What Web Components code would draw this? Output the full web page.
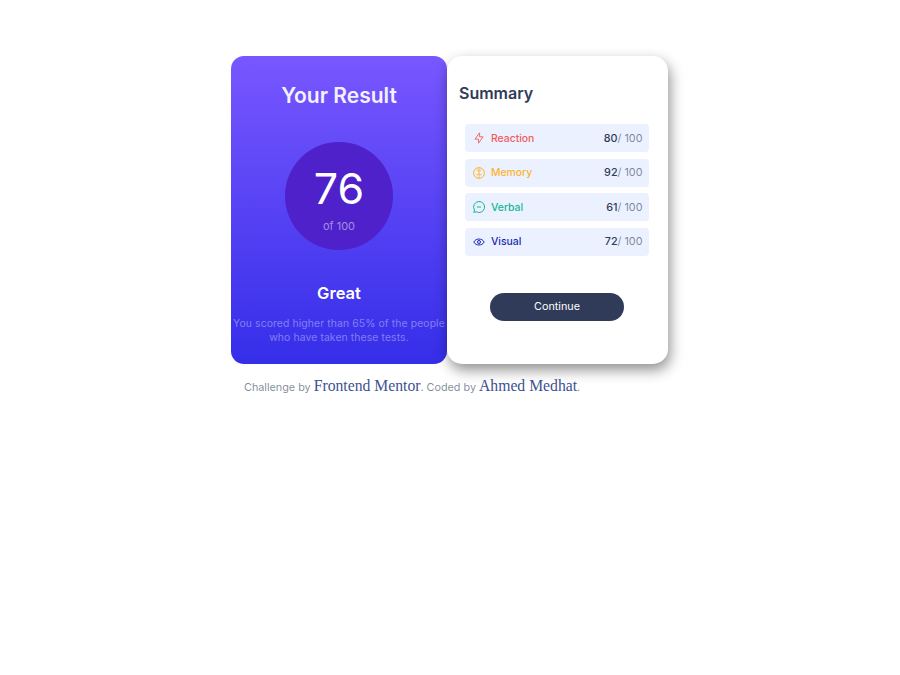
<!DOCTYPE html>
<html lang="en">
<head>
<meta charset="utf-8">
<title>Results summary</title>
<style>
html,body{margin:0;background:#fff;}
</style>
</head>
<body>
<result-page>
  <result-panel score="76"></result-panel>
  <summary-panel>
    <score-row label="Reaction" value="80" color="#f25c5c" icon="bolt"></score-row>
    <score-row label="Memory" value="92" color="#fdb52f" icon="brain"></score-row>
    <score-row label="Verbal" value="61" color="#12b893" icon="chat"></score-row>
    <score-row label="Visual" value="72" color="#1a2bb8" icon="eye"></score-row>
  </summary-panel>
  <credit-line slot="foot"></credit-line>
</result-page>
<script>
const F='"Inter","Liberation Sans",sans-serif';
function def(name,html){
  customElements.define(name,class extends HTMLElement{
    connectedCallback(){
      if(this.shadowRoot)return;
      const r=this.attachShadow({mode:'open'});
      r.innerHTML=typeof html==='function'?html(this):html;
    }
  });
}
def('result-page',`<style>
:host{display:block;width:437px;margin-left:231px;padding-top:56px}
.cards{display:flex;height:308px}
</style><div class="cards"><slot></slot></div><slot name="foot"></slot>`);
def('result-panel',h=>`<style>
:host{display:flex;flex-direction:column;align-items:center;box-sizing:border-box;width:216px;height:308px;flex:none;border-radius:13px;background:linear-gradient(#7857ff,#352ee9);color:#fff;font-family:${F};text-align:center}
h1{margin:26px 0 0;font-size:21px;line-height:27px;font-weight:600;color:#f4f1ff}
.c{margin-top:33px;width:108px;height:108px;border-radius:50%;background:#4e21ca;display:flex;flex-direction:column;align-items:center}
.n{font-size:43px;line-height:54px;margin-top:19px;font-weight:400;color:#fff}
.o{font-size:11px;line-height:14px;margin-top:4px;color:#ebf1ff88}
h2{margin:32px 0 0;font-size:16.500px;line-height:22px;font-weight:600}
p{margin:12.500px 0 0;font-size:10.400px;line-height:14.400px;color:#ebf1ff66;white-space:nowrap;letter-spacing:.1px}
</style><h1>Your Result</h1><div class="c"><div class="n">${h.getAttribute('score')}</div><div class="o">of 100</div></div><h2>Great</h2><p>You scored higher than 65% of the people<br>who have taken these tests.</p>`);
def('summary-panel',`<style>
:host{display:flex;flex-direction:column;box-sizing:border-box;width:221px;height:308px;flex:none;border-radius:15px;background:#fff;box-shadow:2px 6px 14px #00000070;font-family:${F};padding:0 18px 0 12px;position:relative}
h2{margin:26px 0 0;font-size:16px;line-height:22px;font-weight:600;color:#303b5a}
.l{display:flex;flex-direction:column;gap:6.400px;margin:20.400px 0 0 6px}
button{display:block;align-self:flex-start;margin:37px 0 0 31px;width:134px;height:28px;border:0;border-radius:14px;background:#303b5a;color:#fff;font:400 10.800px ${F}}
</style><h2>Summary</h2><div class="l"><slot></slot></div><button>Continue</button>`);
const icons={
bolt:'<path d="M7.600 5.800V1.800L3 8.200h3.500v4l4.600-6.400Z" fill="none" stroke="currentColor" stroke-width=".9" stroke-linejoin="round"/>',
brain:'<circle cx="7" cy="7" r="5.400" fill="none" stroke="currentColor" stroke-width="1"/><path d="M7 1.800v10.400M7 5 4.600 3.800M7 5l2.400-1.200M7 8 4.400 9M7 8l2.600 1" fill="none" stroke="currentColor" stroke-width=".9"/>',
chat:'<path d="M7 1.500a5.500 5.500 0 1 1-2.600 10.300L1.800 12.400l.7-2.400A5.500 5.500 0 0 1 7 1.500Z" fill="none" stroke="currentColor" stroke-width="1"/><path d="M5 7h4" stroke="currentColor" stroke-width="1"/>',
eye:'<path d="M1.800 7C3 5 4.800 4 7 4s4 1 5.200 3c-1.200 2-3 3-5.200 3S3 9 1.800 7Z" fill="none" stroke="currentColor" stroke-width="1"/><circle cx="7" cy="7" r="1.500" fill="none" stroke="currentColor" stroke-width="1"/>'};
def('score-row',h=>`<style>
:host{display:flex;align-items:center;box-sizing:border-box;width:184px;height:28px;padding:0 6.500px 0 6.500px;border-radius:4px;background:#ebf1ff;font-family:${F};font-size:10.400px}
svg{width:14px;height:14px;flex:none;margin-right:5.500px}
.a{color:${h.getAttribute('color')};font-weight:500;flex:1}
.v{color:#303b5a;font-weight:500;font-size:10.800px}
.t{color:#303b5a99;white-space:pre;font-size:10.800px}
</style><svg viewBox="0 0 14 14" style="color:${h.getAttribute('color')}">${icons[h.getAttribute('icon')]}</svg><span class="a">${h.getAttribute('label')}</span><span class="v">${h.getAttribute('value')}</span><span class="t">/ 100</span>`);
def('credit-line',`<style>
:host{display:block;margin:13px 0 0 13px;white-space:nowrap;font-family:${F};font-size:10.800px;line-height:20px;color:#303b5a99}
a{font:15.700px "Liberation Serif",serif;color:#3e5193;text-decoration:none}
</style>Challenge by <a>Frontend Mentor</a>. Coded by <a>Ahmed Medhat</a>.`);
</script>
</body>
</html>
